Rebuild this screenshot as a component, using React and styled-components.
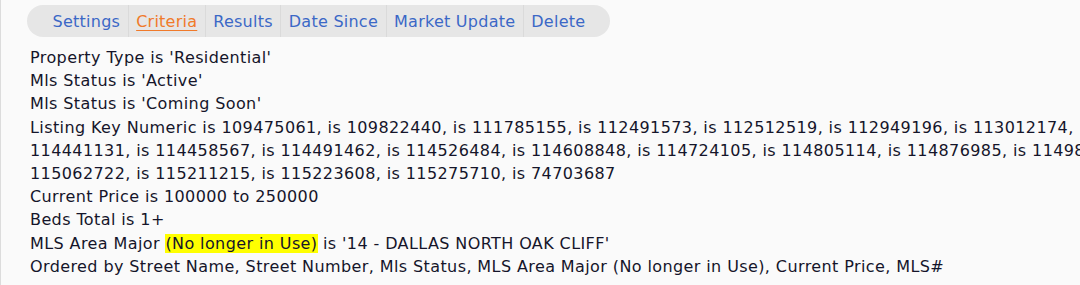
import React from 'react';
import styled, { createGlobalStyle } from 'styled-components';

const GlobalStyle = createGlobalStyle`
  html, body {
    margin: 0;
    padding: 0;
    background: #fafafa;
  }
  body {
    font-family: "DejaVu Sans", Verdana, sans-serif;
  }
`;

const Page = styled.div`
  width: 1080px;
  height: 285px;
  box-sizing: border-box;
  border-left: 1px solid #dcdcdc;
  background: #fafafa;
  overflow: hidden;
  padding: 5px 0 0 26px;
`;

const TabBar = styled.nav`
  display: inline-flex;
  align-items: stretch;
  height: 32px;
  background: #e6e6e6;
  border-radius: 16px;
  padding: 0 17px 0 18px;
`;

const Tab = styled.a`
  display: flex;
  align-items: center;
  padding: 0 7.5px;
  font-size: 16px;
  letter-spacing: 0.25px;
  color: ${({ $active }) => ($active ? '#f07a2a' : '#3b68c6')};
  text-decoration: ${({ $active }) => ($active ? 'underline' : 'none')};
  text-underline-offset: 3px;
  cursor: pointer;
  & + & {
    border-left: 1px solid #dadada;
  }
`;

const Criteria = styled.div`
  padding: 9px 0 0 3px;
  font-size: 16px;
  letter-spacing: 0.4px;
  line-height: 23.2px;
  color: #15152a;
  white-space: nowrap;
`;

const Line = styled.div``;

const Mark = styled.span`
  background: #ffff00;
`;

const tabs = ['Settings', 'Criteria', 'Results', 'Date Since', 'Market Update', 'Delete'];

export default function App() {
  return (
    <>
      <GlobalStyle />
      <Page>
        <TabBar>
          {tabs.map((t) => (
            <Tab key={t} $active={t === 'Criteria'}>{t}</Tab>
          ))}
        </TabBar>
        <Criteria>
          <Line>Property Type is 'Residential'</Line>
          <Line>Mls Status is 'Active'</Line>
          <Line>Mls Status is 'Coming Soon'</Line>
          <Line>Listing Key Numeric is 109475061, is 109822440, is 111785155, is 112491573, is 112512519, is 112949196, is 113012174, is</Line>
          <Line>114441131, is 114458567, is 114491462, is 114526484, is 114608848, is 114724105, is 114805114, is 114876985, is 114981234,</Line>
          <Line>115062722, is 115211215, is 115223608, is 115275710, is 74703687</Line>
          <Line>Current Price is 100000 to 250000</Line>
          <Line>Beds Total is 1+</Line>
          <Line>MLS Area Major <Mark>(No longer in Use)</Mark> is '14 - DALLAS NORTH OAK CLIFF'</Line>
          <Line>Ordered by Street Name, Street Number, Mls Status, MLS Area Major (No longer in Use), Current Price, MLS#</Line>
        </Criteria>
      </Page>
    </>
  );
}
